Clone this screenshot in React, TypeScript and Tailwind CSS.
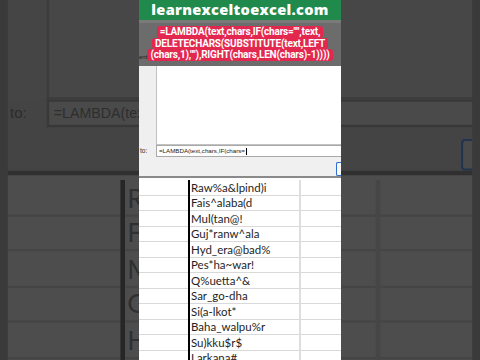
const names = [
  "Raw%a&lpind)i",
  "Fais^alaba(d",
  "Mul(tan@!",
  "Guj*ranw^ala",
  "Hyd_era@bad%",
  "Pes*ha~war!",
  "Q%uetta^&",
  "Sar_go-dha",
  "Si(a-lkot*",
  "Baha_walpu%r",
  "Su)kku$r$",
  "Larkana#",
];

const caption = [
  '=LAMBDA(text,chars,IF(chars="",text,',
  "DELETECHARS(SUBSTITUTE(text,LEFT",
  '(chars,1),""),RIGHT(chars,LEN(chars)-1))))',
];

// normal colours for the video frame, and darkened ones for the zoomed copy at the sides
const lit = {
  root: "bg-[#f0f0f0]",
  banner: "bg-[#1f8a4b] text-white",
  shade: "border-[#7a7a7a] bg-[#6c6c6c]",
  tag: "bg-[#e3284f] text-white",
  label: "text-[#2a2a2a]",
  strip: "bg-[#efefef]",
  area: "border-[#c2c2c2] bg-white",
  input: "border-[#a9a9a9] bg-white text-[#222]",
  caret: "bg-black",
  button: "border-[#2f6fd0] bg-[#fafafa]",
  rule: "bg-[#8a8a8a]",
  sheet: "bg-white text-[#1e1e1e]",
  grid: "border-[#d9d9d9]",
  edge: "bg-black",
  divider: "bg-[#dedede]",
};

const dim = {
  root: "bg-[#444444]",
  banner: "bg-[#163a24] text-[#777777]",
  shade: "border-[#333333] bg-[#2e2e2e]",
  tag: "bg-[#5a1a26] text-[#777777]",
  label: "text-[#2c2c2c]",
  strip: "bg-[#454545]",
  area: "border-[#3c3c3c] bg-[#474747]",
  input: "border-[#383838] bg-[#4a4a4a] text-[#2e2e2e]",
  caret: "bg-[#2a2a2a]",
  button: "border-[#22344f] bg-[#4a4a4a]",
  rule: "bg-[#303030]",
  sheet: "bg-[#4d4d4d] text-[#303030]",
  grid: "border-[#454545]",
  edge: "bg-[#262626]",
  divider: "bg-[#464646]",
};

function Frame({ dark = false }: { dark?: boolean }) {
  const c = dark ? dim : lit;
  return (
    <div className={`flex h-[360px] w-[202px] shrink-0 flex-col overflow-hidden ${c.root}`}>
      <div className={`flex h-[20px] shrink-0 items-center justify-center font-['Open_Sans',sans-serif] text-[14.6px] font-extrabold tracking-[0.3px] ${c.banner}`}>
        learnexceltoexcel.com
      </div>

      <div className={`relative flex h-[46px] shrink-0 flex-col items-center border-t-[3px] pt-[3px] font-['Roboto',sans-serif] ${c.shade}`}>
        {caption.map((line) => (
          <div
            key={line}
            className={`whitespace-nowrap rounded-[3px] px-[3px] text-[10px] font-bold leading-[11.5px] tracking-[-0.2px] ${c.tag}`}
          >
            {line}
          </div>
        ))}
        <span className={`absolute bottom-[5px] left-0 text-[6px] ${c.label}`}>ent</span>
      </div>

      <div className="flex h-[79px] shrink-0">
        <div className={`w-[17px] ${c.strip}`} />
        <div className={`flex-1 border-b border-l ${c.area}`} />
      </div>

      <div className="flex h-[12px] shrink-0 items-center font-['Liberation_Sans',sans-serif]">
        <div className={`w-[17px] pl-[1px] text-[6.5px] ${c.label}`}>to:</div>
        <div className={`flex h-full flex-1 items-center border border-r-0 pl-[2px] text-[6.2px] ${c.input}`}>
          =LAMBDA(text,chars,IF(chars=
          <span className={`ml-px h-[7px] w-px ${c.caret}`} />
        </div>
      </div>

      <div className="flex h-[19px] shrink-0 justify-end pt-[5px]">
        <div className={`h-[14px] w-[5px] rounded-l-[2px] border-[1.5px] border-r-0 ${c.button}`} />
      </div>
      <div className={`h-[2px] shrink-0 ${c.rule}`} />

      <div className={`flex flex-1 pt-[2px] font-['Lato',sans-serif] text-[11.5px] ${c.sheet}`}>
        <div className="w-[49px]">
          {names.map((n) => (
            <div key={n} className={`h-[15.5px] border-b ${c.grid}`} />
          ))}
        </div>
        <div className={`w-[2px] ${c.edge}`} />
        <div className="w-[109px]">
          {names.map((n) => (
            <div key={n} className={`flex h-[15.5px] items-center border-b pl-[1px] leading-none ${c.grid}`}>
              {n}
            </div>
          ))}
        </div>
        <div className={`w-[2px] ${c.divider}`} />
        <div className="flex-1">
          {names.map((n) => (
            <div key={n} className={`h-[15.5px] border-b ${c.grid}`} />
          ))}
        </div>
      </div>
    </div>
  );
}

export default function App() {
  return (
    <div className="grid h-[360px] w-[480px] grid-cols-[480px] grid-rows-[360px] overflow-hidden bg-[#3a3a3a]">
      {/* zoomed, darkened copy that fills the letterbox sides */}
      <div className="col-start-1 row-start-1 flex items-center justify-center overflow-hidden">
        <div className="scale-[2.3]">
          <Frame dark />
        </div>
      </div>
      <div className="relative z-10 col-start-1 row-start-1 flex justify-center">
        <Frame />
      </div>
    </div>
  );
}
